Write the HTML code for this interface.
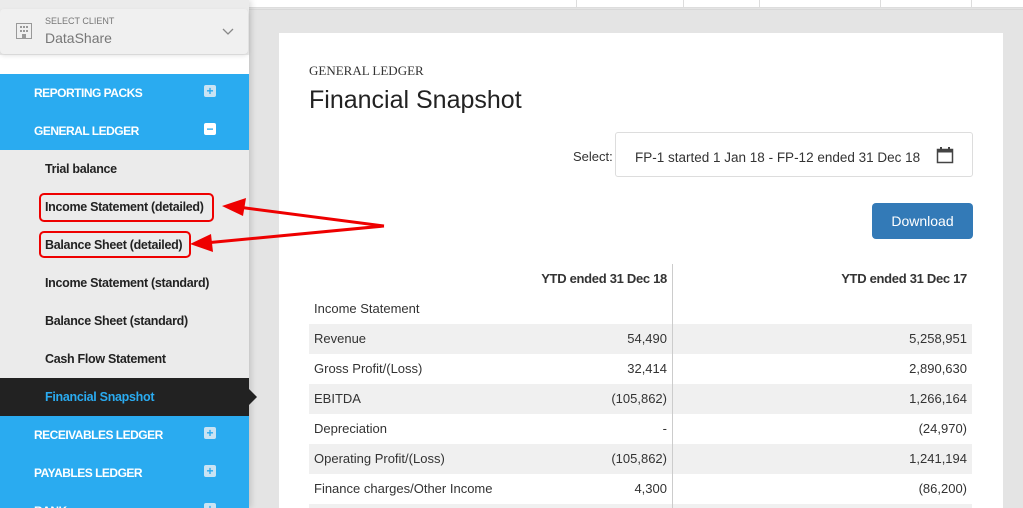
<!DOCTYPE html>
<html style="overflow:hidden;width:1023px;height:508px"><head><style>
*{margin:0;padding:0;box-sizing:border-box}
body{width:1023px;height:508px;overflow:hidden;background:#e4e4e4;font-family:"Liberation Sans",sans-serif;position:relative}
.a{position:absolute}
.top{left:0;top:0;width:1023px;height:8px;background:#fff;border-bottom:1px solid #ddd}
.vl{top:0;width:1px;height:8px;background:#ddd}
.side{left:0;top:0;width:249px;height:508px;background:#ebebeb;box-shadow:2px 0 6px rgba(0,0,0,.15)}
.nav{left:0;width:249px;height:38px;font-weight:bold;line-height:38px;white-space:nowrap}
.blue{background:#2aabf0;color:#fff;padding-left:34px;font-size:12px;letter-spacing:-0.5px}
.sub{color:#222;padding-left:45px;font-size:12.5px;letter-spacing:-0.3px}
.pl{position:absolute;left:204px;top:11px;width:12px;height:12px;background:#c9e3f3;border-radius:2px;color:#2aabf0;font-size:12px;line-height:12px;text-align:center;letter-spacing:0}
.card{left:279px;top:33px;width:724px;height:475px;background:#fff}
.row{left:309px;width:663px;height:30px;font-size:13px;color:#333;line-height:30px}
.row span{position:absolute}
.l{left:5px}.m{right:305px}.r{right:5px}
.g{background:#f0f0f0}
.box{border:2px solid #e00;border-radius:5px}
</style></head><body>
<div class="a top"></div>
<div class="a vl" style="left:576px"></div><div class="a vl" style="left:683px"></div><div class="a vl" style="left:759px"></div><div class="a vl" style="left:880px"></div><div class="a vl" style="left:971px"></div>
<div class="a" style="left:249px;top:9px;width:774px;height:1px;background:#d8d8d8"></div>
<div class="a side"></div>
<div class="a" style="left:0;top:55px;width:249px;height:19px;background:#fff"></div>
<div class="a" style="left:0;top:9px;width:248px;height:45px;background:#f0f0f0;border-radius:4px;box-shadow:0 2px 4px rgba(0,0,0,.1)"></div>
<svg class="a" style="left:15px;top:22px" width="18" height="18"><rect x="1.5" y="1.5" width="15" height="15" fill="none" stroke="#999"/><g fill="#999"><rect x="5" y="4" width="2" height="2"/><rect x="8" y="4" width="2" height="2"/><rect x="11" y="4" width="2" height="2"/><rect x="5" y="8" width="2" height="2"/><rect x="8" y="8" width="2" height="2"/><rect x="11" y="8" width="2" height="2"/><rect x="7" y="12" width="4" height="5"/></g></svg>
<div class="a" style="left:45px;top:16px;font-size:9px;color:#777">SELECT CLIENT</div>
<div class="a" style="left:45px;top:30px;font-size:14px;color:#777">DataShare</div>
<svg class="a" style="left:222px;top:28px" width="12" height="8"><path d="M1 1l5 5 5-5" fill="none" stroke="#888" stroke-width="1.3"/></svg>
<div class="a nav blue" style="top:74px">REPORTING PACKS<div class="pl">+</div></div>
<div class="a nav blue" style="top:112px">GENERAL LEDGER<div class="pl" style="background:#fff;color:#2aabf0">−</div></div>
<div class="a nav sub" style="top:150px">Trial balance</div>
<div class="a nav sub" style="top:188px">Income Statement (detailed)</div>
<div class="a nav sub" style="top:226px">Balance Sheet (detailed)</div>
<div class="a nav sub" style="top:264px">Income Statement (standard)</div>
<div class="a nav sub" style="top:302px">Balance Sheet (standard)</div>
<div class="a nav sub" style="top:340px">Cash Flow Statement</div>
<div class="a nav sub" style="top:378px;background:#222;color:#2aabf0">Financial Snapshot</div>
<div class="a" style="left:249px;top:389px;width:0;height:0;border-top:8px solid transparent;border-bottom:8px solid transparent;border-left:8px solid #222"></div>
<div class="a nav blue" style="top:416px">RECEIVABLES LEDGER<div class="pl">+</div></div>
<div class="a nav blue" style="top:454px">PAYABLES LEDGER<div class="pl">+</div></div>
<div class="a nav blue" style="top:492px">BANK<div class="pl">+</div></div>
<div class="a box" style="left:39px;top:193px;width:175px;height:29px"></div>
<div class="a box" style="left:39px;top:231px;width:152px;height:27px"></div>
<div class="a card"></div>
<div class="a" style="left:309px;top:63px;font-family:'Liberation Serif',serif;font-size:13px;color:#333">GENERAL LEDGER</div>
<div class="a" style="left:309px;top:86px;font-size:25px;color:#222">Financial Snapshot</div>
<div class="a" style="left:573px;top:149px;font-size:13px;color:#333">Select:</div>
<div class="a" style="left:615px;top:132px;width:358px;height:45px;border:1px solid #ddd;border-radius:3px"></div>
<div class="a" style="left:635px;top:150px;font-size:13.5px;color:#333">FP-1 started 1 Jan 18 - FP-12 ended 31 Dec 18</div>
<svg class="a" style="left:936px;top:146px" width="18" height="18"><rect x="1.5" y="3.5" width="15" height="13" fill="none" stroke="#444" stroke-width="1.5"/><rect x="1.5" y="3.5" width="15" height="3" fill="#444"/><rect x="4" y="1" width="2" height="4" fill="#444"/><rect x="12" y="1" width="2" height="4" fill="#444"/></svg>
<div class="a" style="left:872px;top:203px;width:101px;height:36px;background:#337ab7;border-radius:4px;color:#fff;font-size:14px;text-align:center;line-height:36px">Download</div>
<div class="a" style="left:500px;top:271px;width:167px;text-align:right;font-size:13px;font-weight:bold;color:#333;letter-spacing:-0.3px">YTD ended 31 Dec 18</div>
<div class="a" style="left:780px;top:271px;width:187px;text-align:right;font-size:13px;font-weight:bold;color:#333;letter-spacing:-0.3px">YTD ended 31 Dec 17</div>
<div class="a row" style="top:294px"><span class="l">Income Statement</span></div>
<div class="a row g" style="top:324px"><span class="l">Revenue</span><span class="m">54,490</span><span class="r">5,258,951</span></div>
<div class="a row" style="top:354px"><span class="l">Gross Profit/(Loss)</span><span class="m">32,414</span><span class="r">2,890,630</span></div>
<div class="a row g" style="top:384px"><span class="l">EBITDA</span><span class="m">(105,862)</span><span class="r">1,266,164</span></div>
<div class="a row" style="top:414px"><span class="l">Depreciation</span><span class="m">-</span><span class="r">(24,970)</span></div>
<div class="a row g" style="top:444px"><span class="l">Operating Profit/(Loss)</span><span class="m">(105,862)</span><span class="r">1,241,194</span></div>
<div class="a row" style="top:474px"><span class="l">Finance charges/Other Income</span><span class="m">4,300</span><span class="r">(86,200)</span></div>
<div class="a row g" style="top:504px;height:4px"></div>
<div class="a" style="left:672px;top:264px;width:1px;height:244px;background:#ccc"></div>
<svg class="a" style="left:0;top:0" width="1023" height="508"><g fill="#e00" stroke="#e00" stroke-width="3"><line x1="384" y1="226" x2="238" y2="207"/><line x1="384" y1="226" x2="205" y2="243"/></g><polygon points="222,206 246,198 243,216" fill="#e00"/><polygon points="190,244 211,234 213,252" fill="#e00"/></svg>
</body></html>
